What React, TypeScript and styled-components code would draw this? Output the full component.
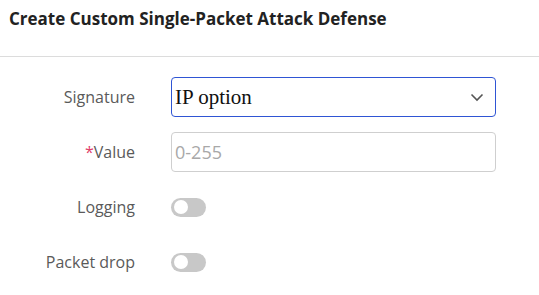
import { useState } from "react";
import styled, { createGlobalStyle } from "styled-components";

const GlobalStyle = createGlobalStyle`
	body {
		margin: 0;
		background: #fff;
		font-family: "Open Sans", "Noto Sans", sans-serif;
	}
`;

const Panel = styled.div`
	width: 539px;
	height: 295px;
	overflow: hidden;
	background: #fff;
`;

const Header = styled.div`
	height: 57px;
	box-sizing: border-box;
	padding: 7px 9px 0;
	border-bottom: 1px solid #dcdcdc;
	font-size: 17px;
	font-weight: 700;
	color: #222;
`;

const Form = styled.div`
	display: flex;
	flex-direction: column;
	gap: 15px;
	padding-top: 20px;
`;

const Row = styled.div`
	display: flex;
	align-items: center;
	height: 40px;
`;

const Label = styled.label`
	width: 135px;
	flex: none;
	text-align: right;
	margin-right: 36px;
	font-size: 16px;
	color: #5a5a5a;
`;

const Star = styled.span`
	color: #e0406a;
`;

const SelectBox = styled.div`
	width: 325px;
	height: 40px;
	box-sizing: border-box;
	border: 1px solid #2f55d4;
	border-radius: 4px;
	display: flex;
	align-items: center;
	padding: 0 11px 0 3px;
	font-family: "Liberation Serif", serif;
	font-size: 21px;
	color: #111;
`;

const SelectText = styled.span`
	flex: 1;
`;

const Input = styled.input`
	width: 325px;
	height: 40px;
	box-sizing: border-box;
	border: 1px solid #cfcfcf;
	border-radius: 4px;
	padding: 0 3px;
	font-family: "Open Sans", "Noto Sans", sans-serif;
	font-size: 18px;
	outline: none;
	&::placeholder {
		color: #a8a8a8;
	}
`;

const Switch = styled.button<{ $on: boolean }>`
	width: 35px;
	height: 19px;
	border-radius: 10px;
	border: none;
	padding: 0;
	position: relative;
	cursor: pointer;
	background: ${p => (p.$on ? "#2f55d4" : "#c8c8c8")};

	&::after {
		content: "";
		position: absolute;
		top: 2.5px;
		left: ${p => (p.$on ? "18px" : "2.5px")};
		width: 14px;
		height: 14px;
		border-radius: 50%;
		background: #fff;
	}
`;

function Chevron() {
	return (
		<svg width="14" height="9" viewBox="0 0 14 9">
			<path d="M1.5 1.5 L7 7 L12.5 1.5" fill="none" stroke="#555" strokeWidth="1.6" />
		</svg>
	);
}

export default function App() {
	const [logging, setLogging] = useState(false);
	const [drop, setDrop] = useState(false);

	return (
		<Panel>
			<GlobalStyle />
			<Header>Create Custom Single-Packet Attack Defense</Header>
			<Form>
				<Row>
					<Label>Signature</Label>
					<SelectBox>
						<SelectText>IP option</SelectText>
						<Chevron />
					</SelectBox>
				</Row>
				<Row>
					<Label><Star>*</Star>Value</Label>
					<Input placeholder="0-255" />
				</Row>
				<Row>
					<Label>Logging</Label>
					<Switch $on={logging} onClick={() => setLogging(!logging)} />
				</Row>
				<Row>
					<Label>Packet drop</Label>
					<Switch $on={drop} onClick={() => setDrop(!drop)} />
				</Row>
			</Form>
		</Panel>
	);
}
